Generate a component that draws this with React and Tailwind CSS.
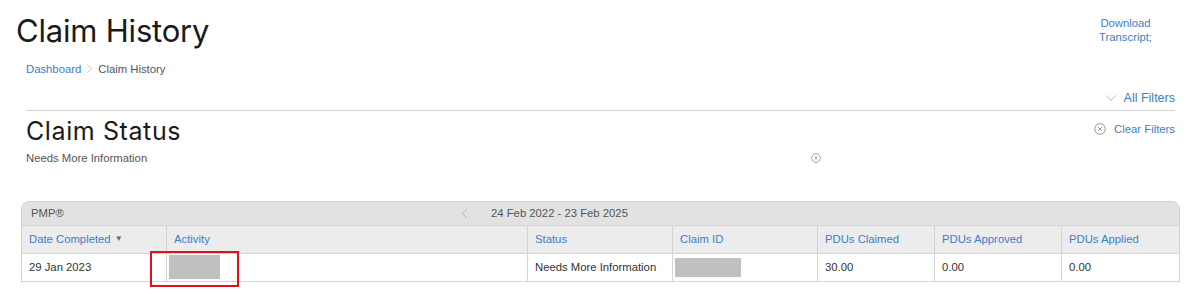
import { ChevronDown, ChevronLeft, ChevronRight } from 'lucide-react';

/* ── small circled x ── */
function CircleX({ size = 12, className = '' }) {
  return (
    <svg width={size} height={size} viewBox="0 0 12 12" fill="none" className={className}>
      <circle cx="6" cy="6" r="5.3" stroke="currentColor" strokeWidth="1" />
      <path d="M4 4l4 4M8 4l-4 4" stroke="currentColor" strokeWidth="1" />
    </svg>
  );
}

const COLS = [
  { label: 'Date Completed', w: 'w-[144px]', sort: true },
  { label: 'Activity', w: 'w-[361px]' },
  { label: 'Status', w: 'w-[145px]' },
  { label: 'Claim ID', w: 'w-[145px]' },
  { label: 'PDUs Claimed', w: 'w-[117px]' },
  { label: 'PDUs Approved', w: 'w-[127px]' },
  { label: 'PDUs Applied', w: 'w-[118px]' },
];

export default function App() {
  return (
    <div className="w-[1200px] h-[294px] overflow-hidden bg-white text-[11.3px] text-[#333] font-['Liberation_Sans',Arial,sans-serif]">
      {/* Header */}
      <div className="flex justify-between pt-[7px]">
        <h1 className="pl-[16px] text-[31px] leading-[48px] font-['Inter',sans-serif] tracking-[-0.2px] text-[#1a1a1a]">
          Claim History
        </h1>
        <a className="pr-[48px] pt-[9px] text-center text-[11.3px] leading-[14px] text-[#3d7ec9]">
          Download<br />Transcript;
        </a>
      </div>

      {/* Breadcrumb */}
      <nav className="flex items-center pl-[26px] mt-[6px] text-[11.3px] leading-[14px]">
        <a className="text-[#3d7ec9]">Dashboard</a>
        <ChevronRight className="w-[15px] h-[15px] mx-[1px] text-[#aaa]" strokeWidth={1.1} />
        <span className="text-[#555]">Claim History</span>
      </nav>

      {/* Filters bar */}
      <div className="mx-[26px] mr-[25px] mt-[13px] flex justify-end items-center border-b border-[#d4d4d4] pb-[3px]">
        <ChevronDown className="w-[18px] h-[18px] text-[#8aa9cc] mr-[4px]" strokeWidth={1.1} />
        <a className="text-[12.5px] leading-[16px] text-[#3d7ec9]">All Filters</a>
      </div>

      {/* Claim status */}
      <div className="flex justify-between pl-[26px] pr-[25px]">
        <div>
          <h2 className="text-[25px] leading-[32px] mt-[4px] font-['Inter',sans-serif] tracking-[0.6px] text-[#1a1a1a]">Claim Status</h2>
          <div className="w-[795px] flex justify-between items-center mt-[3px]">
            <span className="text-[11.3px] text-[#555]">Needs More Information</span>
            <CircleX size={10} className="text-[#999]" />
          </div>
        </div>
        <a className="flex items-center mt-[11px] h-[14px] text-[11.3px] text-[#3d7ec9]">
          <CircleX size={12} className="text-[#999] mr-[8px]" />
          Clear Filters
        </a>
      </div>

      {/* Table */}
      <div className="ml-[21px] w-[1159px] mt-[34px]">
        <div className="h-[25px] flex items-center bg-[#e2e2e2] border border-[#d4d4d4] rounded-t-[8px] text-[#555]">
          <span className="w-[434px] pl-[9px]">PMP®</span>
          <ChevronLeft className="w-[17px] h-[17px] text-[#9fb4d0]" strokeWidth={1.4} />
          <span className="ml-[18px]">24 Feb 2022 - 23 Feb 2025</span>
        </div>
        <div className="flex h-[28px] bg-[#ececec] border-x border-b border-[#d4d4d4]">
          {COLS.map((c, i) => (
            <div
              key={c.label}
              className={`${c.w} shrink-0 flex items-center px-[7px] text-[#3d7ec9] ${i > 0 ? 'border-l border-[#d4d4d4]' : ''}`}
            >
              {c.label}
              {c.sort && <span className="ml-[4px] text-[8px] text-[#666]">▼</span>}
            </div>
          ))}
        </div>
        <div className="flex h-[28px] bg-white border-x border-b border-[#d4d4d4]">
          <div className="w-[144px] shrink-0 flex items-center px-[7px]">29 Jan 2023</div>
          <div className="w-[361px] shrink-0 relative flex items-center pl-[2px] border-l border-[#d4d4d4]">
            <div className="w-[51px] h-[24px] bg-[#c0c0c0]" />
            <div className="absolute left-[-17px] top-[-3px] w-[89px] h-[36px] border-2 border-[#e3101a]" />
          </div>
          <div className="w-[145px] shrink-0 flex items-center px-[7px] border-l border-[#d4d4d4]">Needs More Information</div>
          <div className="w-[145px] shrink-0 flex items-center pl-[2px] border-l border-[#d4d4d4]">
            <div className="w-[66px] h-[19px] bg-[#c0c0c0]" />
          </div>
          <div className="w-[117px] shrink-0 flex items-center px-[7px] border-l border-[#d4d4d4]">30.00</div>
          <div className="w-[127px] shrink-0 flex items-center px-[7px] border-l border-[#d4d4d4]">0.00</div>
          <div className="w-[118px] shrink-0 flex items-center px-[7px] border-l border-[#d4d4d4]">0.00</div>
        </div>
      </div>
    </div>
  );
}
